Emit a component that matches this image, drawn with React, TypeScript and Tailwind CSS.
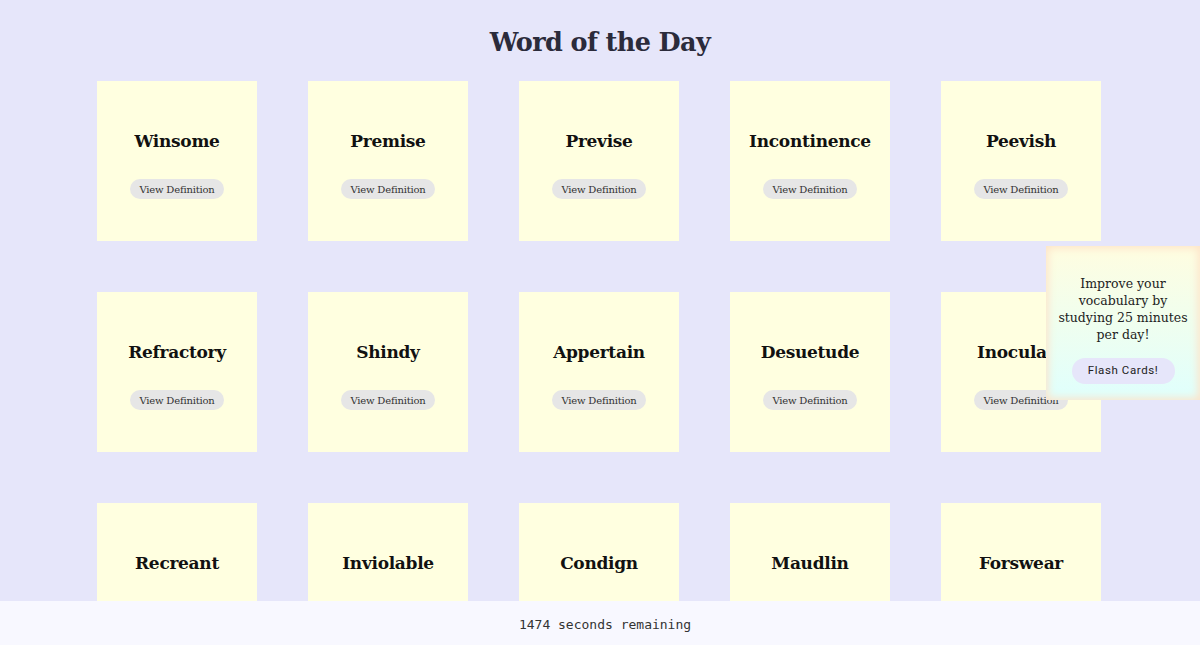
import React from "react";

const words = [
  "Winsome",
  "Premise",
  "Previse",
  "Incontinence",
  "Peevish",
  "Refractory",
  "Shindy",
  "Appertain",
  "Desuetude",
  "Inoculate",
  "Recreant",
  "Inviolable",
  "Condign",
  "Maudlin",
  "Forswear",
];

function WordCard({ word }: { word: string }) {
  return (
    <div className="w-[160px] h-[160px] bg-[#ffffe0] flex flex-col items-center pt-[48px] overflow-hidden">
      <div className="font-['DejaVu_Serif','Liberation_Serif',serif] text-[17px] leading-[24px] font-bold text-[#111] whitespace-nowrap tracking-[-0.3px]">
        {word}
      </div>
      <button className="mt-[26px] h-[20px] px-[9px] rounded-full bg-[#e6e6e6] font-['DejaVu_Serif','Liberation_Serif',serif] text-[10px] text-[#333] whitespace-nowrap tracking-[-0.2px]">
        View Definition
      </button>
    </div>
  );
}

export default function App() {
  return (
    <div className="relative h-[645px] overflow-hidden bg-[#e6e6fa]">
      <h1 className="pt-[22px] text-center font-['DejaVu_Serif','Liberation_Serif',serif] text-[25.5px] leading-[40px] font-bold text-[#2b2b3b] tracking-[-0.6px]">
        Word of the Day
      </h1>
      <div className="mt-[19px] ml-[97px] grid grid-cols-[repeat(5,160px)] gap-[51px]">
        {words.map((w) => (
          <WordCard key={w} word={w} />
        ))}
      </div>

      {/* study reminder */}
      <div className="absolute top-[246px] right-0 w-[154px] h-[154px] bg-gradient-to-b from-[#fffde0] to-[#dffffd] shadow-[inset_0_0_8px_2px_#fde3c8] flex flex-col items-center pt-[29px]">
        <p className="w-[140px] text-center font-['DejaVu_Serif','Liberation_Serif',serif] text-[12.5px] leading-[17px] text-[#222]">
          Improve your vocabulary by studying 25 minutes per day!
        </p>
        <button className="mt-[15px] w-[103px] h-[26px] rounded-full bg-[#e6e6fa] font-['Roboto','Liberation_Sans',sans-serif] text-[11.5px] text-[#222] tracking-[0.6px]">
          Flash Cards!
        </button>
      </div>

      {/* countdown footer */}
      <div className="absolute left-0 right-0 bottom-0 h-[44px] pl-[10px] pt-[4px] bg-[#f8f8ff] flex items-center justify-center">
        <span className="font-['DejaVu_Sans_Mono','Liberation_Mono',monospace] text-[13px] text-[#333]">
          1474 seconds remaining
        </span>
      </div>
    </div>
  );
}
